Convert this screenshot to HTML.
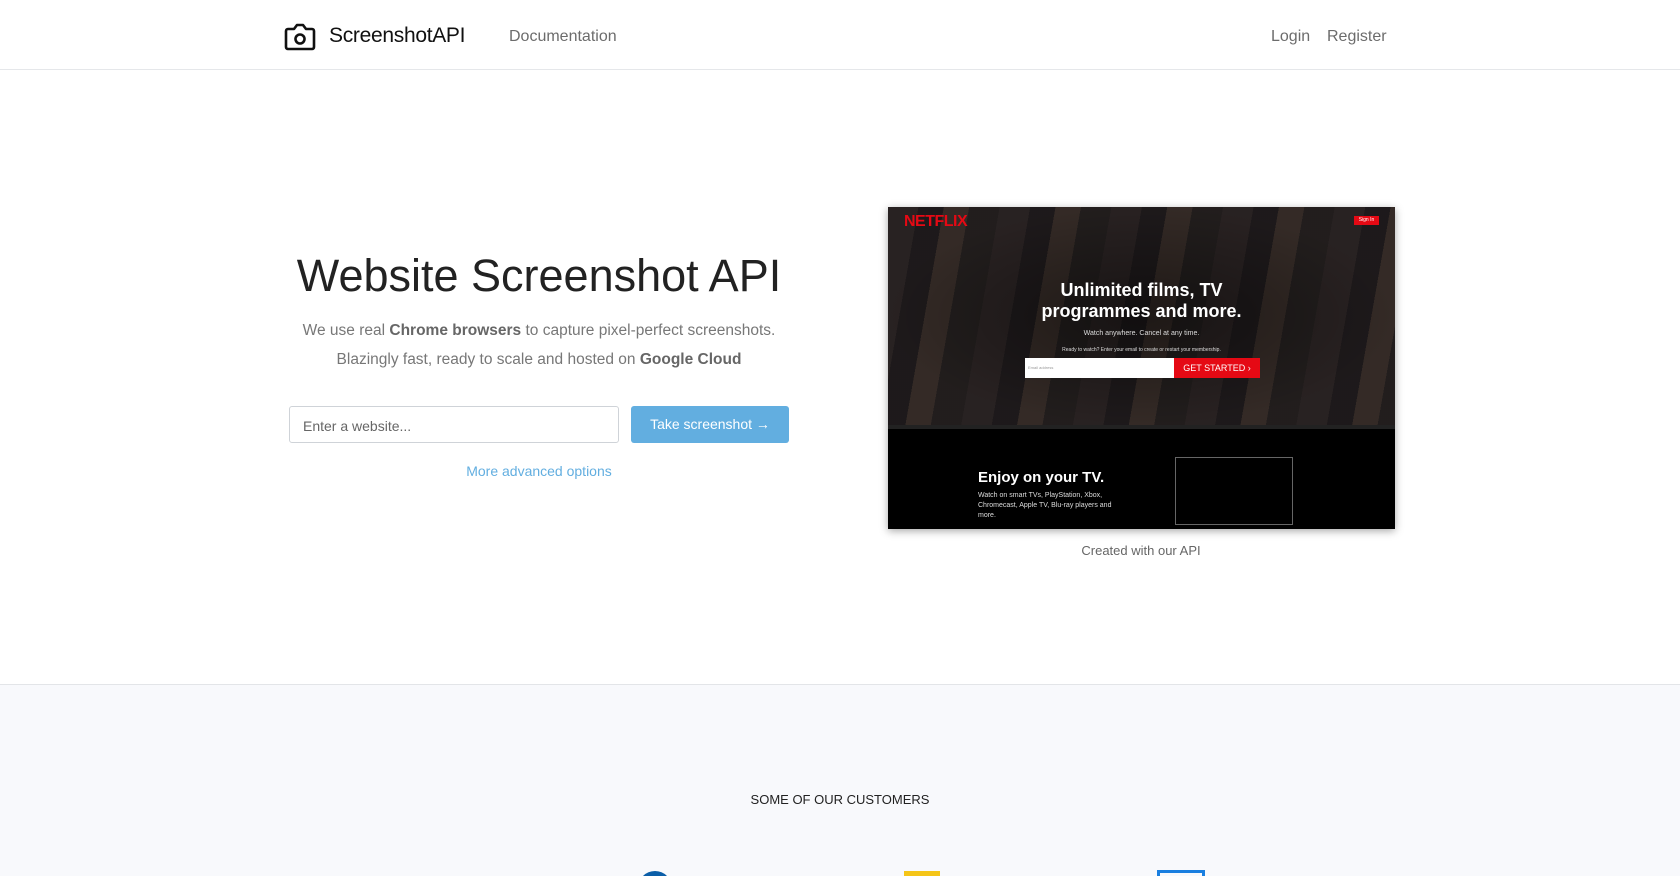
<!DOCTYPE html>
<html style="overflow:hidden;height:876px"><head><meta charset="utf-8"><style>
*{margin:0;padding:0;box-sizing:border-box}
body{width:1680px;height:876px;overflow:hidden;background:#fff;font-family:"Liberation Sans",sans-serif;position:relative}
.a{position:absolute}
nav{position:absolute;left:0;top:0;width:1680px;height:70px;border-bottom:1px solid #e5e7ea}
.gray{position:absolute;left:0;top:684px;width:1680px;height:192px;background:#f8f9fc;border-top:1px solid #e3e5e8;overflow:hidden}
.c{text-align:center;white-space:nowrap}
</style></head><body>
<nav>
<svg class="a" style="left:284px;top:22px" width="32" height="30" viewBox="0 0 32 30"><path d="M4 7h6l3-4h6l3 4h6a2 2 0 0 1 2 2v16a2 2 0 0 1-2 2H4a2 2 0 0 1-2-2V9a2 2 0 0 1 2-2z" fill="none" stroke="#111" stroke-width="2.6" stroke-linejoin="round"/><circle cx="16" cy="17" r="4.5" fill="none" stroke="#111" stroke-width="2.6"/></svg>
<div class="a" style="left:329px;top:24px;font-size:21px;color:#111;letter-spacing:-0.3px">ScreenshotAPI</div>
<div class="a" style="left:509px;top:28px;font-size:16px;color:#6c6c6c">Documentation</div>
<div class="a" style="left:1271px;top:28px;font-size:16px;color:#6c6c6c">Login</div>
<div class="a" style="left:1327px;top:28px;font-size:16px;color:#6c6c6c">Register</div>
</nav>
<div class="a c" style="left:239px;width:600px;top:250px;font-size:45px;color:#222">Website Screenshot API</div>
<div class="a c" style="left:239px;width:600px;top:316px;font-size:15.5px;color:#777;line-height:29px">We use real <b style="color:#666">Chrome browsers</b> to capture pixel-perfect screenshots.<br>Blazingly fast, ready to scale and hosted on <b style="color:#666">Google Cloud</b></div>
<div class="a" style="left:289px;top:406px;width:330px;height:37px;border:1px solid #cfd3d8;border-radius:3px;font-size:14px;color:#666;padding:11px 13px">Enter a website...</div>
<div class="a c" style="left:631px;top:406px;width:158px;height:37px;background:#62aee0;border-radius:3px;font-size:14px;color:#fff;line-height:37px">Take screenshot →</div>
<div class="a c" style="left:389px;width:300px;top:463px;font-size:14px;color:#62aee0">More advanced options</div>
<div class="a" style="left:888px;top:207px;width:507px;height:322px;background:#000;box-shadow:0 2px 8px rgba(0,0,0,.35);overflow:hidden">
<div class="a" style="left:0;top:0;width:507px;height:218px;background:repeating-linear-gradient(100deg,#3a3030 0 30px,#2a2426 30px 55px,#4a3c36 55px 80px,#302a29 80px 110px)"></div>
<div class="a" style="left:0;top:0;width:507px;height:218px;background:radial-gradient(ellipse at 50% 50%,rgba(0,0,0,.6),rgba(0,0,0,.3) 70%)"></div>
<div class="a" style="left:0;top:218px;width:507px;height:4px;background:#222"></div>
<div class="a" style="left:16px;top:6px;font-size:16px;font-weight:bold;color:#e50914;letter-spacing:-0.5px">NETFLIX</div>
<div class="a" style="left:466px;top:9px;width:25px;height:9px;background:#e50914;font-size:5px;color:#fff;text-align:center;line-height:9px">Sign In</div>
<div class="a c" style="left:0;width:507px;top:73px;font-size:18px;font-weight:bold;color:#fff;line-height:21px">Unlimited films, TV<br>programmes and more.</div>
<div class="a c" style="left:0;width:507px;top:123px;font-size:7px;color:#ddd">Watch anywhere. Cancel at any time.</div>
<div class="a c" style="left:0;width:507px;top:140px;font-size:5px;color:#ddd">Ready to watch? Enter your email to create or restart your membership.</div>
<div class="a" style="left:137px;top:151px;width:149px;height:20px;background:#fff;font-size:4px;color:#999;padding:7px 3px">Email address</div>
<div class="a c" style="left:286px;top:151px;width:86px;height:20px;background:#e50914;font-size:9px;color:#fff;line-height:20px">GET STARTED ›</div>
<div class="a" style="left:90px;top:262px;font-size:15px;font-weight:bold;color:#fff">Enjoy on your TV.</div>
<div class="a" style="left:90px;top:284px;font-size:7px;color:#ddd;line-height:10px">Watch on smart TVs, PlayStation, Xbox,<br>Chromecast, Apple TV, Blu-ray players and<br>more.</div>
<div class="a" style="left:287px;top:250px;width:118px;height:68px;border:1px solid #666"></div>
</div>
<div class="a c" style="left:991px;width:300px;top:543px;font-size:13px;color:#666">Created with our API</div>
<div class="gray">
<div class="a c" style="left:690px;width:300px;top:107px;font-size:13px;color:#222">SOME OF OUR CUSTOMERS</div>
<div class="a" style="left:638px;top:186px;width:34px;height:34px;border-radius:50%;background:#0b5ea8"></div>
<div class="a" style="left:904px;top:186px;width:36px;height:10px;background:#f5c518"></div>
<div class="a" style="left:1157px;top:185px;width:48px;height:12px;border:3px solid #1a7fe0;border-bottom:none"></div>
</div>
</body></html>
